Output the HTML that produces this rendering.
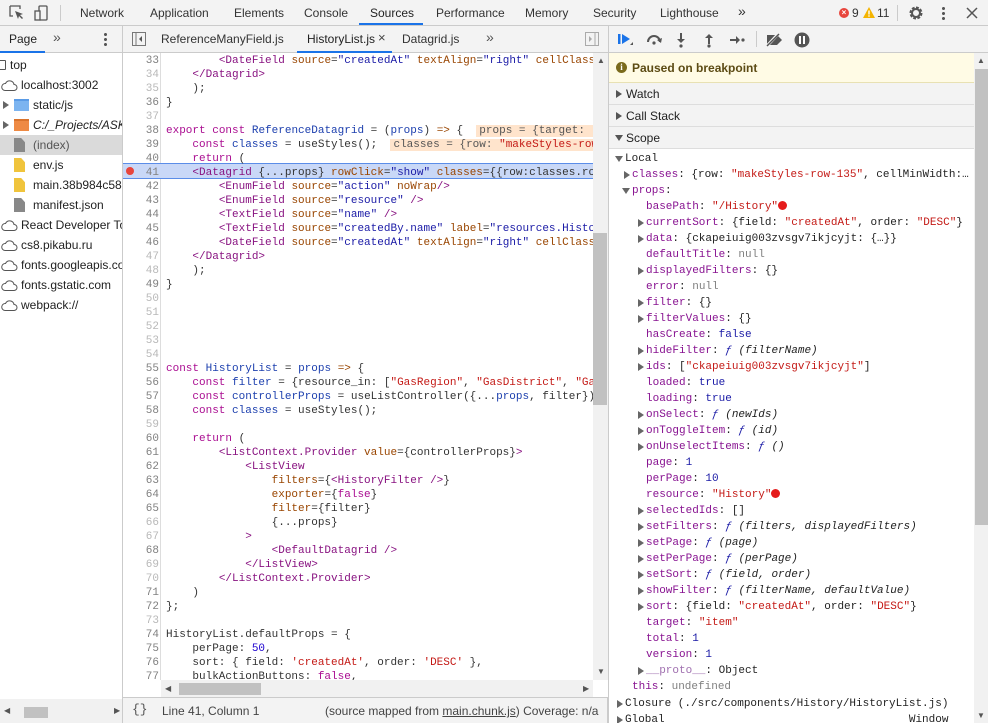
<!DOCTYPE html>
<html><head><meta charset="utf-8">
<style>
*{margin:0;padding:0;box-sizing:border-box}
body{width:988px;height:723px;overflow:hidden;background:#fff;font-family:"Liberation Sans",sans-serif;font-size:12px;color:#333;position:relative}
.abs{position:absolute}
.mono{font-family:"Liberation Mono",monospace;font-size:11px;white-space:pre}
#top{left:0;top:0;width:988px;height:26px;background:#f3f3f3;border-bottom:1px solid #cbcbcb}
#top span.t{position:absolute;top:6px;color:#333;font-size:12px}
#row2{left:0;top:26px;width:988px;height:27px;background:#f3f3f3;border-bottom:1px solid #cbcbcb}
.vsep{position:absolute;width:1px;background:#cbcbcb}
#left{left:0;top:53px;width:123px;height:670px;background:#fff;border-right:1px solid #cbcbcb;overflow:hidden}
.tr{position:absolute;left:0;height:20px;width:122px;white-space:nowrap;font-size:12px;color:#222;line-height:20px}
#ed{left:123px;top:53px;width:485px;height:644px;background:#fff;overflow:hidden}
.ln{position:absolute;left:0;width:36px;text-align:right;color:#808080}
.lg{color:#b8b8b8}
.cl{position:absolute;left:43px;height:14px;line-height:14px}
.k{color:#aa0d91}.d{color:#1c3fae}.tg{color:#881280}.a{color:#994500}.s{color:#1a1aa6}.r{color:#c41a16}.n{color:#1c00cf}
.iv{background:#ffe4cc;color:#555;padding:0 3px}
#sc{left:608px;top:53px;width:380px;height:670px;overflow:hidden;background:#fff;border-left:1px solid #cbcbcb}
.sr{position:absolute;height:16px;line-height:16px;white-space:pre;font-family:"Liberation Mono",monospace;font-size:11px;color:#222}
.p{color:#881391}.nul{color:#808080}.f{color:#1a1aa6;font-style:italic}.fi{font-style:italic;color:#222}
.ar{display:inline-block;width:0;height:0;border-top:4px solid transparent;border-bottom:4px solid transparent;border-left:6px solid #555;position:absolute}
.ad{display:inline-block;width:0;height:0;border-left:4px solid transparent;border-right:4px solid transparent;border-top:6px solid #555;position:absolute}
.sec{position:absolute;left:0;width:365px;height:22px;border-bottom:1px solid #ddd;background:#f3f3f3;line-height:22px;font-size:12px;color:#222}
.bp{display:inline-block;width:9px;height:9px;border-radius:50%;background:#e51c1c;vertical-align:-1px}
</style></head><body>

<div id="top" class="abs">
  <svg class="abs" style="left:8px;top:4px" width="18" height="18" viewBox="0 0 18 18"><path d="M2 2h10v3M2 2v10h3" fill="none" stroke="#555" stroke-width="1.3"/><path d="M7 7l8 3-3 1 3 3-1 1-3-3-1 3z" fill="#555"/></svg>
  <svg class="abs" style="left:33px;top:4px" width="18" height="18" viewBox="0 0 18 18"><rect x="6" y="2" width="8" height="14" rx="1" fill="none" stroke="#555" stroke-width="1.3"/><rect x="2" y="7" width="5" height="9" fill="#f3f3f3" stroke="#555" stroke-width="1.3"/></svg>
  <div class="vsep" style="left:60px;top:5px;height:16px"></div>
  <span class="t" style="left:80px">Network</span>
  <span class="t" style="left:150px">Application</span>
  <span class="t" style="left:234px">Elements</span>
  <span class="t" style="left:304px">Console</span>
  <span class="t" style="left:370px;color:#222">Sources</span>
  <div class="abs" style="left:359px;top:23px;width:64px;height:2px;background:#1a73e8"></div>
  <span class="t" style="left:436px">Performance</span>
  <span class="t" style="left:525px">Memory</span>
  <span class="t" style="left:593px">Security</span>
  <span class="t" style="left:660px">Lighthouse</span>
  <span class="t" style="left:738px;font-size:14px;top:3px">»</span>
  <div class="abs" style="left:839px;top:8px;width:10px;height:10px;border-radius:50%;background:#e8453c;color:#fff;font-size:8px;line-height:10px;text-align:center;font-weight:bold">×</div>
  <span class="t" style="left:852px">9</span>
  <svg class="abs" style="left:863px;top:7px" width="12" height="11" viewBox="0 0 12 11"><path d="M6 0L12 11H0z" fill="#f4b400"/><rect x="5.3" y="3.5" width="1.4" height="4" fill="#fff"/><rect x="5.3" y="8.3" width="1.4" height="1.4" fill="#fff"/></svg>
  <span class="t" style="left:877px">11</span>
  <div class="vsep" style="left:897px;top:5px;height:16px"></div>
  <svg class="abs" style="left:908px;top:5px" width="16" height="16" viewBox="0 0 16 16"><circle cx="8" cy="8" r="5" fill="none" stroke="#555" stroke-width="3" stroke-dasharray="2.6 1.3"/><circle cx="8" cy="8" r="4" fill="none" stroke="#555" stroke-width="2"/></svg>
  <div class="abs" style="left:942px;top:6px;width:3px;height:14px;background:radial-gradient(circle,#555 1.4px,transparent 1.6px) 0 0/3px 5px"></div>
  <svg class="abs" style="left:966px;top:7px" width="12" height="12" viewBox="0 0 12 12"><path d="M1 1l10 10M11 1L1 11" stroke="#555" stroke-width="1.5"/></svg>
</div>

<div id="row2" class="abs">
  <span class="abs" style="left:9px;top:6px;color:#222">Page</span>
  <div class="abs" style="left:0;top:25px;width:45px;height:2px;background:#1a73e8"></div>
  <span class="abs" style="left:53px;top:3px;font-size:14px;color:#555">»</span>
  <div class="abs" style="left:104px;top:6px;width:3px;height:14px;background:radial-gradient(circle,#555 1.4px,transparent 1.6px) 0 0/3px 5px"></div>
  <div class="vsep" style="left:122px;top:0;height:27px"></div>
  <svg class="abs" style="left:132px;top:6px" width="14" height="14" viewBox="0 0 14 14"><rect x="0.5" y="0.5" width="13" height="13" fill="none" stroke="#777"/><path d="M4 1v12" stroke="#777"/><path d="M10 4v6L7 7z" fill="#555"/></svg>
  <span class="abs" style="left:161px;top:6px">ReferenceManyField.js</span>
  <span class="abs" style="left:307px;top:6px;color:#222">HistoryList.js</span>
  <span class="abs" style="left:378px;top:4px;font-size:13px;color:#444">×</span>
  <div class="abs" style="left:297px;top:25px;width:95px;height:2px;background:#1a73e8"></div>
  <span class="abs" style="left:402px;top:6px">Datagrid.js</span>
  <span class="abs" style="left:486px;top:3px;font-size:14px;color:#555">»</span>
  <svg class="abs" style="left:585px;top:6px" width="14" height="14" viewBox="0 0 14 14"><rect x="0.5" y="0.5" width="13" height="13" fill="none" stroke="#aaa"/><path d="M10 1v12" stroke="#aaa"/><path d="M4 4v6l3-3z" fill="#aaa"/></svg>
  <div class="vsep" style="left:608px;top:0;height:27px"></div>
  <svg class="abs" style="left:616px;top:5px" width="18" height="18" viewBox="0 0 18 18"><rect x="2" y="3" width="2.5" height="10" fill="#1a73e8"/><path d="M6 3l8 5-8 5z" fill="#1a73e8"/><path d="M14 14l3 0 0-3z" fill="#555"/></svg>
  <svg class="abs" style="left:645px;top:5px" width="18" height="18" viewBox="0 0 18 18"><path d="M3 11a6 6 0 0 1 12 0" fill="none" stroke="#555" stroke-width="2"/><path d="M12 9l4 3 1-5z" fill="#555"/><circle cx="9" cy="12" r="1.6" fill="#555"/></svg>
  <svg class="abs" style="left:673px;top:5px" width="16" height="18" viewBox="0 0 16 18"><path d="M8 2v8" stroke="#555" stroke-width="2"/><path d="M4 8l4 4 4-4z" fill="#555"/><circle cx="8" cy="15" r="1.6" fill="#555"/></svg>
  <svg class="abs" style="left:701px;top:5px" width="16" height="18" viewBox="0 0 16 18"><path d="M8 6v7" stroke="#555" stroke-width="2"/><path d="M4 7l4-4 4 4z" fill="#555"/><circle cx="8" cy="15" r="1.6" fill="#555"/></svg>
  <svg class="abs" style="left:728px;top:5px" width="18" height="18" viewBox="0 0 18 18"><path d="M2 9h8" stroke="#555" stroke-width="2"/><path d="M8 5l4 4-4 4z" fill="#555"/><circle cx="15" cy="9" r="1.6" fill="#555"/></svg>
  <div class="vsep" style="left:756px;top:5px;height:16px"></div>
  <svg class="abs" style="left:764px;top:5px" width="20" height="18" viewBox="0 0 20 18"><path d="M3 4h10l5 5-5 5H3z" fill="#555"/><path d="M2 16L15 2" stroke="#f3f3f3" stroke-width="3"/><path d="M3 15L15 3" stroke="#555" stroke-width="1.5"/></svg>
  <svg class="abs" style="left:793px;top:5px" width="18" height="18" viewBox="0 0 18 18"><circle cx="9" cy="9" r="7.5" fill="#555"/><rect x="6" y="5" width="2" height="8" fill="#fff"/><rect x="10" y="5" width="2" height="8" fill="#fff"/></svg>
</div>

<div id="left" class="abs">
  <div class="tr" style="top:2px"><span style="position:absolute;left:-3px;top:5px;width:9px;height:10px;border:1px solid #555;border-radius:1px"></span><span style="position:absolute;left:10px">top</span></div>
  <div class="tr" style="top:22px"><svg style="position:absolute;left:1px;top:5px" width="17" height="11" viewBox="0 0 17 11"><path d="M4 10.5h9a3 3 0 0 0 0-6 4.5 4.5 0 0 0-8.5-1A3.5 3.5 0 0 0 4 10.5z" fill="none" stroke="#555"/></svg><span style="position:absolute;left:21px">localhost:3002</span></div>
  <div class="tr" style="top:42px"><span class="ar" style="left:3px;top:6px;border-left-color:#666"></span><span style="position:absolute;left:14px;top:4px;width:15px;height:12px;background:#7cb4f0;border-top:2px solid #5a9be6"></span><span style="position:absolute;left:33px">static/js</span></div>
  <div class="tr" style="top:62px"><span class="ar" style="left:3px;top:6px;border-left-color:#666"></span><span style="position:absolute;left:14px;top:4px;width:15px;height:12px;background:#ee8a44;border-top:2px solid #d9732c"></span><span style="position:absolute;left:33px;font-style:italic">C:/_Projects/ASKU</span></div>
  <div class="tr" style="top:82px;background:#dadada"><span style="position:absolute;left:14px;top:3px;width:11px;height:14px;background:#888;clip-path:polygon(0 0,65% 0,100% 30%,100% 100%,0 100%)"></span><span style="position:absolute;left:33px;color:#555">(index)</span></div>
  <div class="tr" style="top:102px"><span style="position:absolute;left:14px;top:3px;width:11px;height:14px;background:#f0c43c;clip-path:polygon(0 0,65% 0,100% 30%,100% 100%,0 100%)"></span><span style="position:absolute;left:33px">env.js</span></div>
  <div class="tr" style="top:122px"><span style="position:absolute;left:14px;top:3px;width:11px;height:14px;background:#f0c43c;clip-path:polygon(0 0,65% 0,100% 30%,100% 100%,0 100%)"></span><span style="position:absolute;left:33px">main.38b984c582</span></div>
  <div class="tr" style="top:142px"><span style="position:absolute;left:14px;top:3px;width:11px;height:14px;background:#888;clip-path:polygon(0 0,65% 0,100% 30%,100% 100%,0 100%)"></span><span style="position:absolute;left:33px">manifest.json</span></div>
  <div class="tr" style="top:162px"><svg style="position:absolute;left:1px;top:5px" width="17" height="11" viewBox="0 0 17 11"><path d="M4 10.5h9a3 3 0 0 0 0-6 4.5 4.5 0 0 0-8.5-1A3.5 3.5 0 0 0 4 10.5z" fill="none" stroke="#555"/></svg><span style="position:absolute;left:21px">React Developer To</span></div>
  <div class="tr" style="top:182px"><svg style="position:absolute;left:1px;top:5px" width="17" height="11" viewBox="0 0 17 11"><path d="M4 10.5h9a3 3 0 0 0 0-6 4.5 4.5 0 0 0-8.5-1A3.5 3.5 0 0 0 4 10.5z" fill="none" stroke="#555"/></svg><span style="position:absolute;left:21px">cs8.pikabu.ru</span></div>
  <div class="tr" style="top:202px"><svg style="position:absolute;left:1px;top:5px" width="17" height="11" viewBox="0 0 17 11"><path d="M4 10.5h9a3 3 0 0 0 0-6 4.5 4.5 0 0 0-8.5-1A3.5 3.5 0 0 0 4 10.5z" fill="none" stroke="#555"/></svg><span style="position:absolute;left:21px">fonts.googleapis.co</span></div>
  <div class="tr" style="top:222px"><svg style="position:absolute;left:1px;top:5px" width="17" height="11" viewBox="0 0 17 11"><path d="M4 10.5h9a3 3 0 0 0 0-6 4.5 4.5 0 0 0-8.5-1A3.5 3.5 0 0 0 4 10.5z" fill="none" stroke="#555"/></svg><span style="position:absolute;left:21px">fonts.gstatic.com</span></div>
  <div class="tr" style="top:242px"><svg style="position:absolute;left:1px;top:5px" width="17" height="11" viewBox="0 0 17 11"><path d="M4 10.5h9a3 3 0 0 0 0-6 4.5 4.5 0 0 0-8.5-1A3.5 3.5 0 0 0 4 10.5z" fill="none" stroke="#555"/></svg><span style="position:absolute;left:21px">webpack://</span></div>
  <div class="abs" style="left:0;top:646px;width:122px;height:24px;background:#f1f1f1"></div>
  <div class="abs" style="left:24px;top:654px;width:24px;height:11px;background:#c1c1c1"></div>
  <span class="abs" style="left:4px;top:653px;font-size:8px;color:#555">◀</span>
  <span class="abs" style="left:114px;top:653px;font-size:8px;color:#555">▶</span>
</div>

<div id="ed" class="abs mono">
  <div class="abs" style="left:37px;top:0;width:1px;height:627px;background:#ddd"></div>
  <div class="abs" style="left:0;top:110px;width:470px;height:16px;background:#c9d8f7;border-top:1px solid #5b8de8;border-bottom:1px solid #5b8de8"></div>
  <div class="abs" style="left:3px;top:114px;width:8px;height:8px;border-radius:50%;background:#e8453c"></div>
  <div id="code"></div>
  <div class="abs" style="left:470px;top:0;width:15px;height:627px;background:#f1f1f1"></div>
  <div class="abs" style="left:470px;top:180px;width:14px;height:172px;background:#c1c1c1"></div>
  <span class="abs" style="left:474px;top:3px;font-size:8px;color:#555;font-family:'Liberation Sans'">▲</span>
  <span class="abs" style="left:474px;top:614px;font-size:8px;color:#555;font-family:'Liberation Sans'">▼</span>
  <div class="abs" style="left:38px;top:627px;width:432px;height:17px;background:#f1f1f1"></div>
  <div class="abs" style="left:56px;top:630px;width:82px;height:12px;background:#c1c1c1"></div>
  <span class="abs" style="left:42px;top:631px;font-size:8px;color:#555;font-family:'Liberation Sans'">◀</span>
  <span class="abs" style="left:460px;top:631px;font-size:8px;color:#555;font-family:'Liberation Sans'">▶</span>
</div>
<div class="abs" style="left:123px;top:697px;width:485px;height:26px;background:#f3f3f3;border-top:1px solid #cbcbcb;border-right:1px solid #cbcbcb">
  <span class="abs" style="left:9px;top:4px;font-size:13px;color:#555;font-family:'Liberation Mono'">{}</span>
  <span class="abs" style="left:39px;top:6px;color:#444">Line 41, Column 1</span>
  <span class="abs" style="left:202px;top:6px;color:#444;white-space:nowrap">(source mapped from <u>main.chunk.js</u>) Coverage: n/a</span>
</div>

<div id="sc" class="abs">
  <div class="abs" style="left:0;top:0;width:365px;height:30px;background:#fffbe5;border-bottom:1px solid #e8e1b3"></div>
  <div class="abs" style="left:7px;top:9px;width:11px;height:11px;border-radius:50%;background:#7a6a1c;color:#fff;font-size:9px;line-height:11px;text-align:center;font-weight:bold;font-family:'Liberation Serif'">i</div>
  <span class="abs" style="left:23px;top:8px;font-weight:bold;color:#5c4b14">Paused on breakpoint</span>
  <div class="sec" style="top:30px"><span class="ar" style="left:7px;top:7px"></span><span style="position:absolute;left:17px">Watch</span></div>
  <div class="sec" style="top:52px"><span class="ar" style="left:7px;top:7px"></span><span style="position:absolute;left:17px">Call Stack</span></div>
  <div class="sec" style="top:74px"><span class="ad" style="left:6px;top:8px"></span><span style="position:absolute;left:17px">Scope</span></div>
  <div id="scope"></div>
  <div class="abs" style="left:365px;top:0;width:15px;height:670px;background:#f1f1f1"></div>
  <div class="abs" style="left:366px;top:16px;width:13px;height:456px;background:#c1c1c1"></div>
  <span class="abs" style="left:368px;top:3px;font-size:8px;color:#555">▲</span>
  <span class="abs" style="left:368px;top:658px;font-size:8px;color:#555">▼</span>
</div>

<script>
(function(){
var L={
33:'        <span class="tg">&lt;DateField</span> <span class="a">source</span>=<span class="s">"createdAt"</span> <span class="a">textAlign</span>=<span class="s">"right"</span> <span class="a">cellClassName</span>',
34:'    <span class="tg">&lt;/Datagrid&gt;</span>',
35:'    );',
36:'}',
37:'',
38:'<span class="k">export</span> <span class="k">const</span> <span class="d">ReferenceDatagrid</span> = (<span class="d">props</span>) <span class="a">=&gt;</span> {  <span class="iv">props = {target: "item"</span>',
39:'    <span class="k">const</span> <span class="d">classes</span> = useStyles();  <span class="iv">classes = {row: <span class="r">"makeStyles-row-135"</span></span>',
40:'    <span class="k">return</span> (',
41:'    <span class="tg">&lt;Datagrid</span> {...props} <span class="a">rowClick</span>=<span class="s">"show"</span> <span class="a">classes</span>={{row:classes.row}}',
42:'        <span class="tg">&lt;EnumField</span> <span class="a">source</span>=<span class="s">"action"</span> <span class="a">noWrap</span><span class="tg">/&gt;</span>',
43:'        <span class="tg">&lt;EnumField</span> <span class="a">source</span>=<span class="s">"resource"</span> <span class="tg">/&gt;</span>',
44:'        <span class="tg">&lt;TextField</span> <span class="a">source</span>=<span class="s">"name"</span> <span class="tg">/&gt;</span>',
45:'        <span class="tg">&lt;TextField</span> <span class="a">source</span>=<span class="s">"createdBy.name"</span> <span class="a">label</span>=<span class="s">"resources.History"</span>',
46:'        <span class="tg">&lt;DateField</span> <span class="a">source</span>=<span class="s">"createdAt"</span> <span class="a">textAlign</span>=<span class="s">"right"</span> <span class="a">cellClassName</span>',
47:'    <span class="tg">&lt;/Datagrid&gt;</span>',
48:'    );',
49:'}',
50:'',51:'',52:'',53:'',54:'',
55:'<span class="k">const</span> <span class="d">HistoryList</span> = <span class="d">props</span> <span class="a">=&gt;</span> {',
56:'    <span class="k">const</span> <span class="d">filter</span> = {resource_in: [<span class="r">"GasRegion"</span>, <span class="r">"GasDistrict"</span>, <span class="r">"GasStation"</span>',
57:'    <span class="k">const</span> <span class="d">controllerProps</span> = useListController({...<span class="d">props</span>, filter});',
58:'    <span class="k">const</span> <span class="d">classes</span> = useStyles();',
59:'',
60:'    <span class="k">return</span> (',
61:'        <span class="tg">&lt;ListContext.Provider</span> <span class="a">value</span>={controllerProps}<span class="tg">&gt;</span>',
62:'            <span class="tg">&lt;ListView</span>',
63:'                <span class="a">filters</span>={<span class="tg">&lt;HistoryFilter /&gt;</span>}',
64:'                <span class="a">exporter</span>={<span class="k">false</span>}',
65:'                <span class="a">filter</span>={filter}',
66:'                {...props}',
67:'            <span class="tg">&gt;</span>',
68:'                <span class="tg">&lt;DefaultDatagrid /&gt;</span>',
69:'            <span class="tg">&lt;/ListView&gt;</span>',
70:'        <span class="tg">&lt;/ListContext.Provider&gt;</span>',
71:'    )',
72:'};',
73:'',
74:'HistoryList.defaultProps = {',
75:'    perPage: <span class="n">50</span>,',
76:'    sort: { field: <span class="r">\'createdAt\'</span>, order: <span class="r">\'DESC\'</span> },',
77:'    bulkActionButtons: <span class="k">false</span>,',
78:''};
var gray=[34,35,37,47,48,50,51,52,53,54,59,66,67,69,70,73,78];
var h='';
for(var i=33;i<=78;i++){var t=1+(i-33)*14;
h+='<div class="ln'+(gray.indexOf(i)>=0?' lg':'')+'" style="top:'+t+'px;line-height:14px">'+i+'</div>';
h+='<div class="cl" style="top:'+t+'px">'+L[i]+'</div>';}
document.getElementById('code').innerHTML='<div style="position:absolute;left:0;top:0;width:470px;height:627px;overflow:hidden">'+h+'</div>';

var S=[
[7,'d','<span style="color:#222">Local</span>'],
[14,'r','<span class="p">classes</span>: {row: <span class="r">"makeStyles-row-135"</span>, cellMinWidth:…'],
[14,'d','<span class="p">props</span>:'],
[28,'','<span class="p">basePath</span>: <span class="r">"/History"</span><span class="bp"></span>'],
[28,'r','<span class="p">currentSort</span>: {field: <span class="r">"createdAt"</span>, order: <span class="r">"DESC"</span>}'],
[28,'r','<span class="p">data</span>: {ckapeiuig003zvsgv7ikjcyjt: {…}}'],
[28,'','<span class="p">defaultTitle</span>: <span class="nul">null</span>'],
[28,'r','<span class="p">displayedFilters</span>: {}'],
[28,'','<span class="p">error</span>: <span class="nul">null</span>'],
[28,'r','<span class="p">filter</span>: {}'],
[28,'r','<span class="p">filterValues</span>: {}'],
[28,'','<span class="p">hasCreate</span>: <span class="s">false</span>'],
[28,'r','<span class="p">hideFilter</span>: <span class="f">ƒ</span> <span class="fi">(filterName)</span>'],
[28,'r','<span class="p">ids</span>: [<span class="r">"ckapeiuig003zvsgv7ikjcyjt"</span>]'],
[28,'','<span class="p">loaded</span>: <span class="s">true</span>'],
[28,'','<span class="p">loading</span>: <span class="s">true</span>'],
[28,'r','<span class="p">onSelect</span>: <span class="f">ƒ</span> <span class="fi">(newIds)</span>'],
[28,'r','<span class="p">onToggleItem</span>: <span class="f">ƒ</span> <span class="fi">(id)</span>'],
[28,'r','<span class="p">onUnselectItems</span>: <span class="f">ƒ</span> <span class="fi">()</span>'],
[28,'','<span class="p">page</span>: <span class="s">1</span>'],
[28,'','<span class="p">perPage</span>: <span class="s">10</span>'],
[28,'','<span class="p">resource</span>: <span class="r">"History"</span><span class="bp"></span>'],
[28,'r','<span class="p">selectedIds</span>: []'],
[28,'r','<span class="p">setFilters</span>: <span class="f">ƒ</span> <span class="fi">(filters, displayedFilters)</span>'],
[28,'r','<span class="p">setPage</span>: <span class="f">ƒ</span> <span class="fi">(page)</span>'],
[28,'r','<span class="p">setPerPage</span>: <span class="f">ƒ</span> <span class="fi">(perPage)</span>'],
[28,'r','<span class="p">setSort</span>: <span class="f">ƒ</span> <span class="fi">(field, order)</span>'],
[28,'r','<span class="p">showFilter</span>: <span class="f">ƒ</span> <span class="fi">(filterName, defaultValue)</span>'],
[28,'r','<span class="p">sort</span>: {field: <span class="r">"createdAt"</span>, order: <span class="r">"DESC"</span>}'],
[28,'','<span class="p">target</span>: <span class="r">"item"</span>'],
[28,'','<span class="p">total</span>: <span class="s">1</span>'],
[28,'','<span class="p">version</span>: <span class="s">1</span>'],
[28,'r','<span class="p" style="color:#a070b0">__proto__</span>: Object'],
[14,'','<span class="p">this</span>: <span class="nul">undefined</span>'],
[7,'r','<span style="color:#222">Closure (./src/components/History/HistoryList.js)</span>'],
[7,'r','<span style="color:#222">Global</span>                                     <span style="color:#222">Window</span>']
];
var s='';
for(var j=0;j<S.length;j++){var top=98+j*16+(j>=34?1:0);var x=S[j][0];
var ic='';
if(S[j][1]=='r')ic='<span class="ar" style="left:'+(x+1)+'px;top:'+(top+4)+'px;border-left-color:#666"></span>';
if(S[j][1]=='d')ic='<span class="ad" style="left:'+(x-1)+'px;top:'+(top+5)+'px;border-top-color:#666"></span>';
s+=ic+'<div class="sr" style="left:'+(x+9)+'px;top:'+top+'px">'+S[j][2]+'</div>';}
document.getElementById('scope').innerHTML=s;
})();
</script>
</body></html>
